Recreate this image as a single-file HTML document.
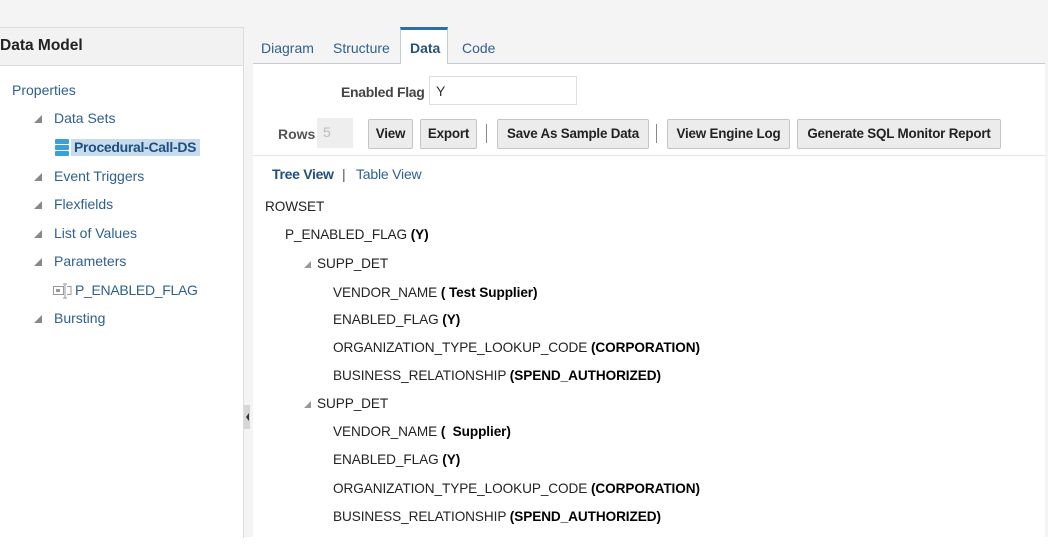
<!DOCTYPE html>
<html><head><meta charset="utf-8"><style>
body{margin:0;width:1048px;height:552px;position:relative;overflow:hidden;font-family:"Liberation Sans",Arial,sans-serif;font-size:14px;background:#fff;}
.a{position:absolute;white-space:nowrap;}
.top{position:absolute;left:0;top:0;width:1048px;height:537px;background:#f4f4f4;}
.lp{position:absolute;left:0;top:27px;width:243px;height:510px;background:#fff;border-right:1px solid #dcdcdc;border-top:1px solid #dcdcdc;}
.lph{position:absolute;left:0;top:0;width:243px;height:37px;background:#f2f2f2;border-bottom:1px solid #dcdcdc;}
.rp{position:absolute;left:253px;top:63px;width:792px;height:474px;background:#fff;border-top:1px solid #c4cbd3;}
.lnk{color:#2f5f8f;}
.tri{position:absolute;width:0;height:0;border-left:8px solid transparent;border-bottom:8px solid #888;}
.btn{position:absolute;top:119px;height:28px;border:1px solid #c5c5c5;background:#ececec;border-radius:2px;font-weight:bold;color:#222;font-size:13.4px;line-height:28px;text-align:center;letter-spacing:-0.2px;}
.t{color:#222;font-size:13.6px;letter-spacing:-0.08px;}
b{color:#000;}
</style></head><body>
<div class="top"></div>
<div class="lp"><div class="lph"></div></div>
<div class="a" style="left:0;top:37px;font-size:15.5px;font-weight:bold;color:#222;">Data Model</div>
<div class="a lnk" style="left:12px;top:82px;">Properties</div>
<div class="tri" style="left:34px;top:115px;"></div><div class="a lnk" style="left:54px;top:110px;">Data Sets</div>
<svg class="a" style="left:55px;top:139px" width="14" height="18"><rect x="0" y="0" width="14" height="5" rx="1" fill="#3aa0d8"/><rect x="0" y="6" width="14" height="5" rx="1" fill="#3aa0d8"/><rect x="0" y="12" width="14" height="5" rx="1" fill="#3aa0d8"/></svg>
<div class="a" style="left:71px;top:139px;background:#c6dcec;padding:0 4px 0 3px;height:17px;font-weight:bold;color:#1f4f80;line-height:17px;letter-spacing:-0.3px;">Procedural-Call-DS</div>
<div class="tri" style="left:34px;top:173px;"></div><div class="a lnk" style="left:54px;top:168px;">Event Triggers</div>
<div class="tri" style="left:34px;top:201px;"></div><div class="a lnk" style="left:54px;top:196px;">Flexfields</div>
<div class="tri" style="left:34px;top:230px;"></div><div class="a lnk" style="left:54px;top:225px;">List of Values</div>
<div class="tri" style="left:34px;top:258px;"></div><div class="a lnk" style="left:54px;top:253px;">Parameters</div>
<svg class="a" style="left:53px;top:283px" width="20" height="16"><rect x="0.5" y="3.5" width="10" height="8" fill="none" stroke="#999"/><rect x="3" y="6" width="4" height="3" fill="#999"/><path d="M12 1v14M10 1h4M10 15h4M14 3.5h4v8h-4" fill="none" stroke="#999"/></svg>
<div class="a lnk" style="left:75px;top:282px;letter-spacing:-0.3px;">P_ENABLED_FLAG</div>
<div class="tri" style="left:34px;top:315px;"></div><div class="a lnk" style="left:54px;top:310px;">Bursting</div>
<div class="a" style="left:244px;top:405px;width:6px;height:24px;background:#d6d6d6;"></div>
<div class="a" style="left:246px;top:413px;width:0;height:0;border-top:4px solid transparent;border-bottom:4px solid transparent;border-right:3px solid #333;"></div>
<div class="rp"></div>
<div class="a" style="left:400px;top:27px;width:48px;height:37px;background:#fff;border:1px solid #c4cbd3;border-top:3px solid #2d6ea8;border-bottom:none;box-sizing:border-box;"></div>
<div class="a lnk" style="left:261px;top:40px;">Diagram</div>
<div class="a lnk" style="left:333px;top:40px;">Structure</div>
<div class="a" style="left:410px;top:40px;font-weight:bold;color:#2a4f7a;">Data</div>
<div class="a lnk" style="left:462px;top:40px;">Code</div>
<div class="a" style="left:341px;top:84px;font-weight:bold;color:#444;letter-spacing:-0.3px;">Enabled Flag</div>
<div class="a" style="left:429px;top:76px;width:146px;height:27px;border:1px solid #dedede;background:#fff;"></div>
<div class="a" style="left:436px;top:83px;color:#333;">Y</div>
<div class="a" style="left:278px;top:126px;font-weight:bold;color:#555;">Rows</div>
<div class="a" style="left:317px;top:118px;width:36px;height:30px;background:#eee;color:#bbb;"><span style="position:absolute;left:6px;top:6px;">5</span></div>
<div class="btn" style="left:368px;width:43px;">View</div>
<div class="btn" style="left:420px;width:55px;">Export</div>
<div class="a" style="left:486px;top:124px;width:1px;height:19px;background:#888;"></div>
<div class="btn" style="left:497px;width:150px;">Save As Sample Data</div>
<div class="a" style="left:656px;top:124px;width:1px;height:19px;background:#888;"></div>
<div class="btn" style="left:667px;width:121px;">View Engine Log</div>
<div class="btn" style="left:797px;width:202px;">Generate SQL Monitor Report</div>
<div class="a" style="left:253px;top:155px;width:792px;height:1px;background:#e2e2e2;"></div>
<div class="a" style="left:272px;top:166px;font-weight:bold;color:#1f4f80;letter-spacing:-0.3px;">Tree View</div>
<div class="a" style="left:342px;top:166px;color:#555;">|</div>
<div class="a lnk" style="left:356px;top:166px;letter-spacing:-0.2px;">Table View</div>
<div class="a t" style="left:265px;top:199px;">ROWSET</div>
<div class="a t" style="left:285px;top:227px;">P_ENABLED_FLAG <b>(Y)</b></div>
<div class="tri" style="left:304px;top:261px;border-left-width:7px;border-bottom-width:7px;border-bottom-color:#999;"></div><div class="a t" style="left:317px;top:256px;">SUPP_DET</div>
<div class="a t" style="left:333px;top:285px;">VENDOR_NAME <b>( Test Supplier)</b></div>
<div class="a t" style="left:333px;top:312px;">ENABLED_FLAG <b>(Y)</b></div>
<div class="a t" style="left:333px;top:340px;">ORGANIZATION_TYPE_LOOKUP_CODE <b>(CORPORATION)</b></div>
<div class="a t" style="left:333px;top:368px;">BUSINESS_RELATIONSHIP <b>(SPEND_AUTHORIZED)</b></div>
<div class="tri" style="left:304px;top:401px;border-left-width:7px;border-bottom-width:7px;border-bottom-color:#999;"></div><div class="a t" style="left:317px;top:396px;">SUPP_DET</div>
<div class="a t" style="left:333px;top:424px;">VENDOR_NAME <b>(&nbsp; Supplier)</b></div>
<div class="a t" style="left:333px;top:452px;">ENABLED_FLAG <b>(Y)</b></div>
<div class="a t" style="left:333px;top:481px;">ORGANIZATION_TYPE_LOOKUP_CODE <b>(CORPORATION)</b></div>
<div class="a t" style="left:333px;top:509px;">BUSINESS_RELATIONSHIP <b>(SPEND_AUTHORIZED)</b></div>
</body></html>
